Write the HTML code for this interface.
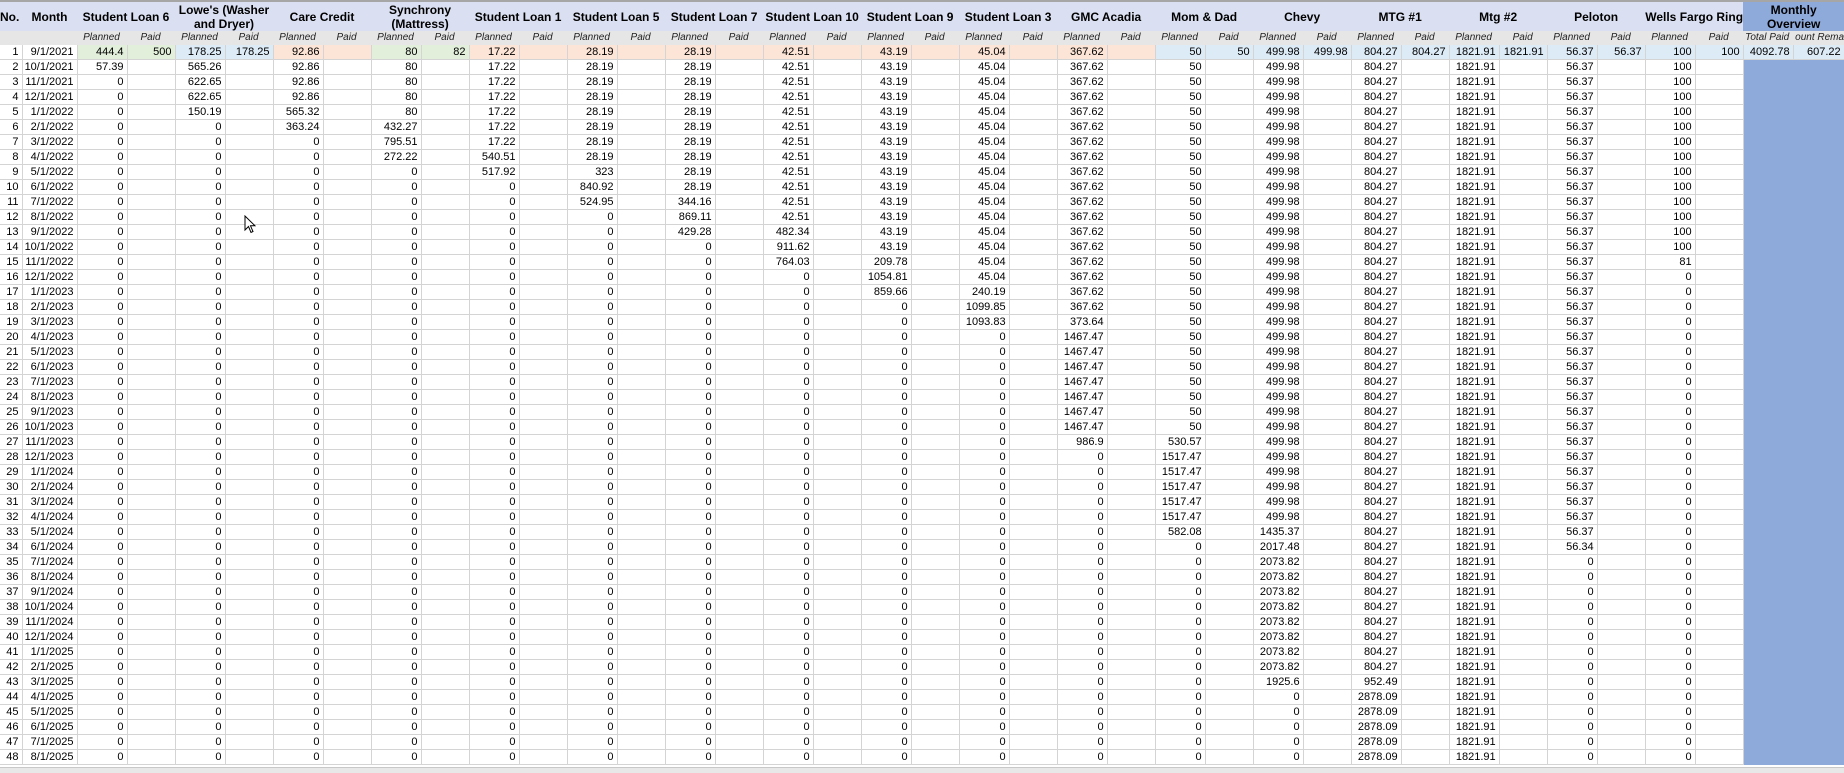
<!DOCTYPE html>
<html><head><meta charset="utf-8"><style>
html,body{margin:0;padding:0;background:#fff;width:1844px;height:772px;overflow:hidden}
table{border-collapse:collapse;table-layout:fixed;width:1844px;font-family:"Liberation Sans",sans-serif;font-size:11px;color:#000}
td{padding:0 3px 0 2px;height:14px;line-height:14px;white-space:nowrap;overflow:hidden;text-align:right;border-right:1px solid #d4d4d4;border-bottom:1px solid #d4d4d4}
tr.h td{height:29px;line-height:14px;background:#dae0f1;border:none;border-top:2px solid #a6a6a6;font-weight:bold;font-size:12px;text-align:center;white-space:normal;padding:0}
tr.s td{background:#e6e6e6;border:none;font-style:italic;font-size:10px;text-align:center;color:#222}
tr.h td.ov,tr.s td.ov{background:#8eaadb}
tr.s td.ov{background:#e6e6e6}
td.ov{background:#8eaadb;border-right:none;border-bottom:none}
tr.r1 td{background:#ddebf7}
tr.r1 td.g{background:#e2efda}tr.r1 td.o{background:#fce4d6}tr.r1 td.w{background:#fff}
.bot{position:absolute;left:0;top:767px;width:1844px;height:5px;background:#e8e8e8;border-top:1px solid #c8c8c8}
</style></head><body>
<table>
<colgroup><col style="width:22px"><col style="width:55px">
<col style="width:50px"><col style="width:48px"><col style="width:50px"><col style="width:48px"><col style="width:50px"><col style="width:48px"><col style="width:50px"><col style="width:48px"><col style="width:50px"><col style="width:48px"><col style="width:50px"><col style="width:48px"><col style="width:50px"><col style="width:48px"><col style="width:50px"><col style="width:48px"><col style="width:50px"><col style="width:48px"><col style="width:50px"><col style="width:48px"><col style="width:50px"><col style="width:48px"><col style="width:50px"><col style="width:48px"><col style="width:50px"><col style="width:48px"><col style="width:50px"><col style="width:48px"><col style="width:50px"><col style="width:48px"><col style="width:50px"><col style="width:48px"><col style="width:50px"><col style="width:48px">
<col style="width:50px"><col style="width:51px"></colgroup>
<tr class="h"><td style="text-align:left">No.</td><td>Month</td><td colspan=2>Student Loan 6</td><td colspan=2>Lowe's (Washer and Dryer)</td><td colspan=2>Care Credit</td><td colspan=2>Synchrony (Mattress)</td><td colspan=2>Student Loan 1</td><td colspan=2>Student Loan 5</td><td colspan=2>Student Loan 7</td><td colspan=2>Student Loan 10</td><td colspan=2>Student Loan 9</td><td colspan=2>Student Loan 3</td><td colspan=2>GMC Acadia</td><td colspan=2>Mom &amp; Dad</td><td colspan=2>Chevy</td><td colspan=2>MTG #1</td><td colspan=2>Mtg #2</td><td colspan=2>Peloton</td><td colspan=2>Wells Fargo Ring</td><td colspan=2 class="ov">Monthly Overview</td></tr>
<tr class="s"><td></td><td></td><td>Planned</td><td>Paid</td><td>Planned</td><td>Paid</td><td>Planned</td><td>Paid</td><td>Planned</td><td>Paid</td><td>Planned</td><td>Paid</td><td>Planned</td><td>Paid</td><td>Planned</td><td>Paid</td><td>Planned</td><td>Paid</td><td>Planned</td><td>Paid</td><td>Planned</td><td>Paid</td><td>Planned</td><td>Paid</td><td>Planned</td><td>Paid</td><td>Planned</td><td>Paid</td><td>Planned</td><td>Paid</td><td>Planned</td><td>Paid</td><td>Planned</td><td>Paid</td><td>Planned</td><td>Paid</td><td class="ov" style="text-align:left">Total Paid</td><td class="ov" style="text-align:left">ount Remain</td></tr>
<tr class="r1"><td class="w">1</td><td class="w">9/1/2021</td><td class="g">444.4</td><td class="g">500</td><td>178.25</td><td>178.25</td><td class="o">92.86</td><td class="o"></td><td class="g">80</td><td class="g">82</td><td class="o">17.22</td><td class="o"></td><td class="o">28.19</td><td class="o"></td><td class="o">28.19</td><td class="o"></td><td class="o">42.51</td><td class="o"></td><td class="o">43.19</td><td class="o"></td><td class="o">45.04</td><td class="o"></td><td class="o">367.62</td><td class="o"></td><td>50</td><td>50</td><td>499.98</td><td>499.98</td><td>804.27</td><td>804.27</td><td>1821.91</td><td>1821.91</td><td>56.37</td><td>56.37</td><td>100</td><td>100</td><td>4092.78</td><td>607.22</td></tr>
<tr><td>2<td>10/1/2021<td>57.39<td><td>565.26<td><td>92.86<td><td>80<td><td>17.22<td><td>28.19<td><td>28.19<td><td>42.51<td><td>43.19<td><td>45.04<td><td>367.62<td><td>50<td><td>499.98<td><td>804.27<td><td>1821.91<td><td>56.37<td><td>100<td><td class=ov><td class=ov></tr>
<tr><td>3<td>11/1/2021<td>0<td><td>622.65<td><td>92.86<td><td>80<td><td>17.22<td><td>28.19<td><td>28.19<td><td>42.51<td><td>43.19<td><td>45.04<td><td>367.62<td><td>50<td><td>499.98<td><td>804.27<td><td>1821.91<td><td>56.37<td><td>100<td><td class=ov><td class=ov></tr>
<tr><td>4<td>12/1/2021<td>0<td><td>622.65<td><td>92.86<td><td>80<td><td>17.22<td><td>28.19<td><td>28.19<td><td>42.51<td><td>43.19<td><td>45.04<td><td>367.62<td><td>50<td><td>499.98<td><td>804.27<td><td>1821.91<td><td>56.37<td><td>100<td><td class=ov><td class=ov></tr>
<tr><td>5<td>1/1/2022<td>0<td><td>150.19<td><td>565.32<td><td>80<td><td>17.22<td><td>28.19<td><td>28.19<td><td>42.51<td><td>43.19<td><td>45.04<td><td>367.62<td><td>50<td><td>499.98<td><td>804.27<td><td>1821.91<td><td>56.37<td><td>100<td><td class=ov><td class=ov></tr>
<tr><td>6<td>2/1/2022<td>0<td><td>0<td><td>363.24<td><td>432.27<td><td>17.22<td><td>28.19<td><td>28.19<td><td>42.51<td><td>43.19<td><td>45.04<td><td>367.62<td><td>50<td><td>499.98<td><td>804.27<td><td>1821.91<td><td>56.37<td><td>100<td><td class=ov><td class=ov></tr>
<tr><td>7<td>3/1/2022<td>0<td><td>0<td><td>0<td><td>795.51<td><td>17.22<td><td>28.19<td><td>28.19<td><td>42.51<td><td>43.19<td><td>45.04<td><td>367.62<td><td>50<td><td>499.98<td><td>804.27<td><td>1821.91<td><td>56.37<td><td>100<td><td class=ov><td class=ov></tr>
<tr><td>8<td>4/1/2022<td>0<td><td>0<td><td>0<td><td>272.22<td><td>540.51<td><td>28.19<td><td>28.19<td><td>42.51<td><td>43.19<td><td>45.04<td><td>367.62<td><td>50<td><td>499.98<td><td>804.27<td><td>1821.91<td><td>56.37<td><td>100<td><td class=ov><td class=ov></tr>
<tr><td>9<td>5/1/2022<td>0<td><td>0<td><td>0<td><td>0<td><td>517.92<td><td>323<td><td>28.19<td><td>42.51<td><td>43.19<td><td>45.04<td><td>367.62<td><td>50<td><td>499.98<td><td>804.27<td><td>1821.91<td><td>56.37<td><td>100<td><td class=ov><td class=ov></tr>
<tr><td>10<td>6/1/2022<td>0<td><td>0<td><td>0<td><td>0<td><td>0<td><td>840.92<td><td>28.19<td><td>42.51<td><td>43.19<td><td>45.04<td><td>367.62<td><td>50<td><td>499.98<td><td>804.27<td><td>1821.91<td><td>56.37<td><td>100<td><td class=ov><td class=ov></tr>
<tr><td>11<td>7/1/2022<td>0<td><td>0<td><td>0<td><td>0<td><td>0<td><td>524.95<td><td>344.16<td><td>42.51<td><td>43.19<td><td>45.04<td><td>367.62<td><td>50<td><td>499.98<td><td>804.27<td><td>1821.91<td><td>56.37<td><td>100<td><td class=ov><td class=ov></tr>
<tr><td>12<td>8/1/2022<td>0<td><td>0<td><td>0<td><td>0<td><td>0<td><td>0<td><td>869.11<td><td>42.51<td><td>43.19<td><td>45.04<td><td>367.62<td><td>50<td><td>499.98<td><td>804.27<td><td>1821.91<td><td>56.37<td><td>100<td><td class=ov><td class=ov></tr>
<tr><td>13<td>9/1/2022<td>0<td><td>0<td><td>0<td><td>0<td><td>0<td><td>0<td><td>429.28<td><td>482.34<td><td>43.19<td><td>45.04<td><td>367.62<td><td>50<td><td>499.98<td><td>804.27<td><td>1821.91<td><td>56.37<td><td>100<td><td class=ov><td class=ov></tr>
<tr><td>14<td>10/1/2022<td>0<td><td>0<td><td>0<td><td>0<td><td>0<td><td>0<td><td>0<td><td>911.62<td><td>43.19<td><td>45.04<td><td>367.62<td><td>50<td><td>499.98<td><td>804.27<td><td>1821.91<td><td>56.37<td><td>100<td><td class=ov><td class=ov></tr>
<tr><td>15<td>11/1/2022<td>0<td><td>0<td><td>0<td><td>0<td><td>0<td><td>0<td><td>0<td><td>764.03<td><td>209.78<td><td>45.04<td><td>367.62<td><td>50<td><td>499.98<td><td>804.27<td><td>1821.91<td><td>56.37<td><td>81<td><td class=ov><td class=ov></tr>
<tr><td>16<td>12/1/2022<td>0<td><td>0<td><td>0<td><td>0<td><td>0<td><td>0<td><td>0<td><td>0<td><td>1054.81<td><td>45.04<td><td>367.62<td><td>50<td><td>499.98<td><td>804.27<td><td>1821.91<td><td>56.37<td><td>0<td><td class=ov><td class=ov></tr>
<tr><td>17<td>1/1/2023<td>0<td><td>0<td><td>0<td><td>0<td><td>0<td><td>0<td><td>0<td><td>0<td><td>859.66<td><td>240.19<td><td>367.62<td><td>50<td><td>499.98<td><td>804.27<td><td>1821.91<td><td>56.37<td><td>0<td><td class=ov><td class=ov></tr>
<tr><td>18<td>2/1/2023<td>0<td><td>0<td><td>0<td><td>0<td><td>0<td><td>0<td><td>0<td><td>0<td><td>0<td><td>1099.85<td><td>367.62<td><td>50<td><td>499.98<td><td>804.27<td><td>1821.91<td><td>56.37<td><td>0<td><td class=ov><td class=ov></tr>
<tr><td>19<td>3/1/2023<td>0<td><td>0<td><td>0<td><td>0<td><td>0<td><td>0<td><td>0<td><td>0<td><td>0<td><td>1093.83<td><td>373.64<td><td>50<td><td>499.98<td><td>804.27<td><td>1821.91<td><td>56.37<td><td>0<td><td class=ov><td class=ov></tr>
<tr><td>20<td>4/1/2023<td>0<td><td>0<td><td>0<td><td>0<td><td>0<td><td>0<td><td>0<td><td>0<td><td>0<td><td>0<td><td>1467.47<td><td>50<td><td>499.98<td><td>804.27<td><td>1821.91<td><td>56.37<td><td>0<td><td class=ov><td class=ov></tr>
<tr><td>21<td>5/1/2023<td>0<td><td>0<td><td>0<td><td>0<td><td>0<td><td>0<td><td>0<td><td>0<td><td>0<td><td>0<td><td>1467.47<td><td>50<td><td>499.98<td><td>804.27<td><td>1821.91<td><td>56.37<td><td>0<td><td class=ov><td class=ov></tr>
<tr><td>22<td>6/1/2023<td>0<td><td>0<td><td>0<td><td>0<td><td>0<td><td>0<td><td>0<td><td>0<td><td>0<td><td>0<td><td>1467.47<td><td>50<td><td>499.98<td><td>804.27<td><td>1821.91<td><td>56.37<td><td>0<td><td class=ov><td class=ov></tr>
<tr><td>23<td>7/1/2023<td>0<td><td>0<td><td>0<td><td>0<td><td>0<td><td>0<td><td>0<td><td>0<td><td>0<td><td>0<td><td>1467.47<td><td>50<td><td>499.98<td><td>804.27<td><td>1821.91<td><td>56.37<td><td>0<td><td class=ov><td class=ov></tr>
<tr><td>24<td>8/1/2023<td>0<td><td>0<td><td>0<td><td>0<td><td>0<td><td>0<td><td>0<td><td>0<td><td>0<td><td>0<td><td>1467.47<td><td>50<td><td>499.98<td><td>804.27<td><td>1821.91<td><td>56.37<td><td>0<td><td class=ov><td class=ov></tr>
<tr><td>25<td>9/1/2023<td>0<td><td>0<td><td>0<td><td>0<td><td>0<td><td>0<td><td>0<td><td>0<td><td>0<td><td>0<td><td>1467.47<td><td>50<td><td>499.98<td><td>804.27<td><td>1821.91<td><td>56.37<td><td>0<td><td class=ov><td class=ov></tr>
<tr><td>26<td>10/1/2023<td>0<td><td>0<td><td>0<td><td>0<td><td>0<td><td>0<td><td>0<td><td>0<td><td>0<td><td>0<td><td>1467.47<td><td>50<td><td>499.98<td><td>804.27<td><td>1821.91<td><td>56.37<td><td>0<td><td class=ov><td class=ov></tr>
<tr><td>27<td>11/1/2023<td>0<td><td>0<td><td>0<td><td>0<td><td>0<td><td>0<td><td>0<td><td>0<td><td>0<td><td>0<td><td>986.9<td><td>530.57<td><td>499.98<td><td>804.27<td><td>1821.91<td><td>56.37<td><td>0<td><td class=ov><td class=ov></tr>
<tr><td>28<td>12/1/2023<td>0<td><td>0<td><td>0<td><td>0<td><td>0<td><td>0<td><td>0<td><td>0<td><td>0<td><td>0<td><td>0<td><td>1517.47<td><td>499.98<td><td>804.27<td><td>1821.91<td><td>56.37<td><td>0<td><td class=ov><td class=ov></tr>
<tr><td>29<td>1/1/2024<td>0<td><td>0<td><td>0<td><td>0<td><td>0<td><td>0<td><td>0<td><td>0<td><td>0<td><td>0<td><td>0<td><td>1517.47<td><td>499.98<td><td>804.27<td><td>1821.91<td><td>56.37<td><td>0<td><td class=ov><td class=ov></tr>
<tr><td>30<td>2/1/2024<td>0<td><td>0<td><td>0<td><td>0<td><td>0<td><td>0<td><td>0<td><td>0<td><td>0<td><td>0<td><td>0<td><td>1517.47<td><td>499.98<td><td>804.27<td><td>1821.91<td><td>56.37<td><td>0<td><td class=ov><td class=ov></tr>
<tr><td>31<td>3/1/2024<td>0<td><td>0<td><td>0<td><td>0<td><td>0<td><td>0<td><td>0<td><td>0<td><td>0<td><td>0<td><td>0<td><td>1517.47<td><td>499.98<td><td>804.27<td><td>1821.91<td><td>56.37<td><td>0<td><td class=ov><td class=ov></tr>
<tr><td>32<td>4/1/2024<td>0<td><td>0<td><td>0<td><td>0<td><td>0<td><td>0<td><td>0<td><td>0<td><td>0<td><td>0<td><td>0<td><td>1517.47<td><td>499.98<td><td>804.27<td><td>1821.91<td><td>56.37<td><td>0<td><td class=ov><td class=ov></tr>
<tr><td>33<td>5/1/2024<td>0<td><td>0<td><td>0<td><td>0<td><td>0<td><td>0<td><td>0<td><td>0<td><td>0<td><td>0<td><td>0<td><td>582.08<td><td>1435.37<td><td>804.27<td><td>1821.91<td><td>56.37<td><td>0<td><td class=ov><td class=ov></tr>
<tr><td>34<td>6/1/2024<td>0<td><td>0<td><td>0<td><td>0<td><td>0<td><td>0<td><td>0<td><td>0<td><td>0<td><td>0<td><td>0<td><td>0<td><td>2017.48<td><td>804.27<td><td>1821.91<td><td>56.34<td><td>0<td><td class=ov><td class=ov></tr>
<tr><td>35<td>7/1/2024<td>0<td><td>0<td><td>0<td><td>0<td><td>0<td><td>0<td><td>0<td><td>0<td><td>0<td><td>0<td><td>0<td><td>0<td><td>2073.82<td><td>804.27<td><td>1821.91<td><td>0<td><td>0<td><td class=ov><td class=ov></tr>
<tr><td>36<td>8/1/2024<td>0<td><td>0<td><td>0<td><td>0<td><td>0<td><td>0<td><td>0<td><td>0<td><td>0<td><td>0<td><td>0<td><td>0<td><td>2073.82<td><td>804.27<td><td>1821.91<td><td>0<td><td>0<td><td class=ov><td class=ov></tr>
<tr><td>37<td>9/1/2024<td>0<td><td>0<td><td>0<td><td>0<td><td>0<td><td>0<td><td>0<td><td>0<td><td>0<td><td>0<td><td>0<td><td>0<td><td>2073.82<td><td>804.27<td><td>1821.91<td><td>0<td><td>0<td><td class=ov><td class=ov></tr>
<tr><td>38<td>10/1/2024<td>0<td><td>0<td><td>0<td><td>0<td><td>0<td><td>0<td><td>0<td><td>0<td><td>0<td><td>0<td><td>0<td><td>0<td><td>2073.82<td><td>804.27<td><td>1821.91<td><td>0<td><td>0<td><td class=ov><td class=ov></tr>
<tr><td>39<td>11/1/2024<td>0<td><td>0<td><td>0<td><td>0<td><td>0<td><td>0<td><td>0<td><td>0<td><td>0<td><td>0<td><td>0<td><td>0<td><td>2073.82<td><td>804.27<td><td>1821.91<td><td>0<td><td>0<td><td class=ov><td class=ov></tr>
<tr><td>40<td>12/1/2024<td>0<td><td>0<td><td>0<td><td>0<td><td>0<td><td>0<td><td>0<td><td>0<td><td>0<td><td>0<td><td>0<td><td>0<td><td>2073.82<td><td>804.27<td><td>1821.91<td><td>0<td><td>0<td><td class=ov><td class=ov></tr>
<tr><td>41<td>1/1/2025<td>0<td><td>0<td><td>0<td><td>0<td><td>0<td><td>0<td><td>0<td><td>0<td><td>0<td><td>0<td><td>0<td><td>0<td><td>2073.82<td><td>804.27<td><td>1821.91<td><td>0<td><td>0<td><td class=ov><td class=ov></tr>
<tr><td>42<td>2/1/2025<td>0<td><td>0<td><td>0<td><td>0<td><td>0<td><td>0<td><td>0<td><td>0<td><td>0<td><td>0<td><td>0<td><td>0<td><td>2073.82<td><td>804.27<td><td>1821.91<td><td>0<td><td>0<td><td class=ov><td class=ov></tr>
<tr><td>43<td>3/1/2025<td>0<td><td>0<td><td>0<td><td>0<td><td>0<td><td>0<td><td>0<td><td>0<td><td>0<td><td>0<td><td>0<td><td>0<td><td>1925.6<td><td>952.49<td><td>1821.91<td><td>0<td><td>0<td><td class=ov><td class=ov></tr>
<tr><td>44<td>4/1/2025<td>0<td><td>0<td><td>0<td><td>0<td><td>0<td><td>0<td><td>0<td><td>0<td><td>0<td><td>0<td><td>0<td><td>0<td><td>0<td><td>2878.09<td><td>1821.91<td><td>0<td><td>0<td><td class=ov><td class=ov></tr>
<tr><td>45<td>5/1/2025<td>0<td><td>0<td><td>0<td><td>0<td><td>0<td><td>0<td><td>0<td><td>0<td><td>0<td><td>0<td><td>0<td><td>0<td><td>0<td><td>2878.09<td><td>1821.91<td><td>0<td><td>0<td><td class=ov><td class=ov></tr>
<tr><td>46<td>6/1/2025<td>0<td><td>0<td><td>0<td><td>0<td><td>0<td><td>0<td><td>0<td><td>0<td><td>0<td><td>0<td><td>0<td><td>0<td><td>0<td><td>2878.09<td><td>1821.91<td><td>0<td><td>0<td><td class=ov><td class=ov></tr>
<tr><td>47<td>7/1/2025<td>0<td><td>0<td><td>0<td><td>0<td><td>0<td><td>0<td><td>0<td><td>0<td><td>0<td><td>0<td><td>0<td><td>0<td><td>0<td><td>2878.09<td><td>1821.91<td><td>0<td><td>0<td><td class=ov><td class=ov></tr>
<tr><td>48<td>8/1/2025<td>0<td><td>0<td><td>0<td><td>0<td><td>0<td><td>0<td><td>0<td><td>0<td><td>0<td><td>0<td><td>0<td><td>0<td><td>0<td><td>2878.09<td><td>1821.91<td><td>0<td><td>0<td><td class=ov><td class=ov></tr>
</table>
<svg style="position:absolute;left:244px;top:215px" width="12" height="20" viewBox="0 0 12 20"><path d="M1 1 L1 15 L4.5 11.5 L7 17.5 L9 16.5 L6.5 10.8 L11 10.8 Z" fill="#fff" stroke="#000" stroke-width="1"/></svg>
<div class="bot"></div>
</body></html>
